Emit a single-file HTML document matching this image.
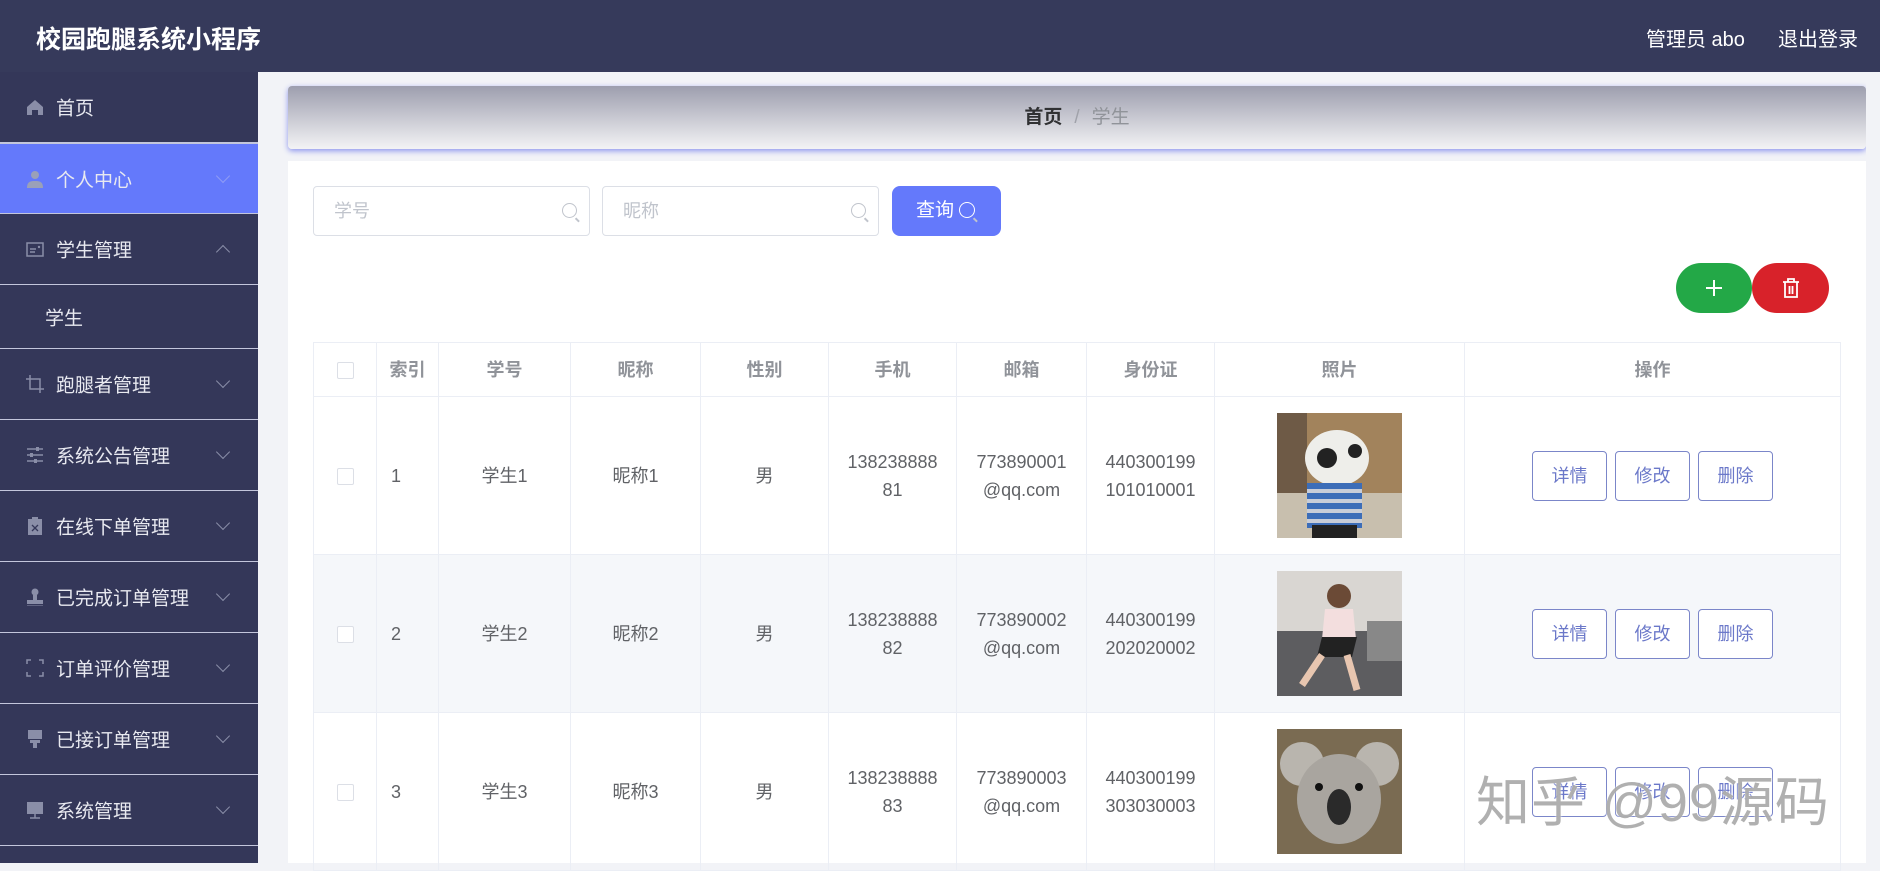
<!DOCTYPE html>
<html><head><meta charset="utf-8">
<style>
*{margin:0;padding:0;box-sizing:border-box}
body{width:1880px;height:863px;overflow:hidden;background:#f2f3f7;font-family:"Liberation Sans","Noto Sans CJK SC",sans-serif;position:relative}
.hdr{position:absolute;left:0;top:0;width:1880px;height:72px;background:#363a5b;color:#fff}
.title{position:absolute;left:36px;top:20px;font-size:25px;font-weight:bold}
.hr{position:absolute;top:23px;font-size:20px}
.side{position:absolute;left:0;top:72px;width:258px;height:791px;background:#343759}
.it{position:absolute;left:0;width:258px;height:71px;color:#e8e9f0;font-size:19px;border-bottom:1.5px solid #c3c6dc}
.it .t{position:absolute;left:56px;top:50%;transform:translateY(-50%)}
.it .ic{position:absolute;left:26px;top:50%;transform:translateY(-50%);width:18px;height:18px}
.it .ar{position:absolute;left:218px;top:50%;margin-top:-8px;width:10px;height:10px;border-right:1.5px solid #8a8ea8;border-bottom:1.5px solid #8a8ea8;transform:rotate(45deg)}
.it .ar.up{transform:rotate(225deg);margin-top:-2px}
.bc{position:absolute;left:288px;top:86px;width:1578px;height:63px;background:linear-gradient(#9d9eae,#f3f3f5);border-radius:4px;box-shadow:0 2px 6px #8c94ee;font-size:19px;text-align:center;line-height:63px}
.card{position:absolute;left:288px;top:161px;width:1578px;height:702px;background:#fff}
.inp{position:absolute;top:186px;width:277px;height:50px;border:1px solid #dcdfe6;border-radius:4px;background:#fff;color:#c0c4cc;font-size:18px;line-height:48px;padding-left:20px}
.mag{position:absolute;right:12px;top:16px;width:15px;height:15px;border:1.5px solid #c0c4cc;border-radius:50%}
.mag:after{content:"";position:absolute;right:-4px;bottom:-3px;width:5px;height:1.5px;background:#c0c4cc;transform:rotate(45deg)}
.qbtn{position:absolute;left:892px;top:186px;width:109px;height:50px;background:#6479fb;border-radius:8px;color:#fff;font-size:19px;line-height:50px;padding-left:24px}
.pill{position:absolute;top:263px;height:50px;border-radius:25px}
table{position:absolute;left:313px;top:342px;border-collapse:collapse;table-layout:fixed;color:#606266;font-size:18px}
td,th{border:1px solid #ebeef5;text-align:center;line-height:28px}
th{height:54px;color:#909399;font-weight:bold}
td{height:158px}
tr.g td{background:#f5f7fa}
.cb{display:inline-block;width:17px;height:17px;border:1px solid #dcdfe6;border-radius:2px;background:#fff;vertical-align:middle}
.ob{display:inline-block;width:75px;height:50px;border:1px solid #7b86c9;border-radius:4px;color:#6b78c9;line-height:48px;margin:0 4px;background:#fff}
.ph{display:block;margin:0 auto;width:125px;height:125px}
.wm{position:absolute;left:1476px;top:758px;font-size:54px;color:rgba(150,150,150,.75);letter-spacing:1px;text-shadow:0 0 2px #fff}
</style></head><body>
<div class="hdr"><div class="title">校园跑腿系统小程序</div>
<div class="hr" style="left:1646px">管理员 abo</div><div class="hr" style="left:1778px">退出登录</div></div>
<div class="side">
<div class="it" style="top:0"><svg class="ic" viewBox="0 0 18 18"><path d="M1 9 9 2l8 7v8h-5v-5H6v5H1z" fill="#8a8ea8"/></svg><span class="t">首页</span></div>
<div class="it" style="top:71px;background:#6479fb;border-top:1.5px solid #c3c6dc"><svg class="ic" viewBox="0 0 18 18"><circle cx="9" cy="5" r="4" fill="#9aa0b8"/><path d="M1 18c0-6 3-7 8-7s8 1 8 7z" fill="#9aa0b8"/></svg><span class="t">个人中心</span><span class="ar" style="border-color:#8f9cf5"></span></div>
<div class="it" style="top:142px"><svg class="ic" viewBox="0 0 18 18"><rect x="1" y="3" width="16" height="13" fill="none" stroke="#8a8ea8" stroke-width="1.5"/><path d="M4 9h6M4 12h5" stroke="#8a8ea8" stroke-width="1.5"/><circle cx="13" cy="7" r="1.2" fill="#8a8ea8"/></svg><span class="t">学生管理</span><span class="ar up"></span></div>
<div class="it" style="top:213px;height:64px;border-bottom:1.5px solid #c3c6dc"><span class="t" style="left:45px">学生</span></div>
<div class="it" style="top:277px"><svg class="ic" viewBox="0 0 18 18"><path d="M4 0v14h14M0 4h14v14" fill="none" stroke="#8a8ea8" stroke-width="1.5"/></svg><span class="t">跑腿者管理</span><span class="ar"></span></div>
<div class="it" style="top:348px"><svg class="ic" viewBox="0 0 18 18"><path d="M1 3h16M1 9h16M1 15h16" stroke="#8a8ea8" stroke-width="1.5"/><rect x="10" y="1" width="3" height="4" fill="#8a8ea8"/><rect x="4" y="7" width="3" height="4" fill="#8a8ea8"/><rect x="8" y="13" width="3" height="4" fill="#8a8ea8"/></svg><span class="t">系统公告管理</span><span class="ar"></span></div>
<div class="it" style="top:419px"><svg class="ic" viewBox="0 0 18 18"><rect x="2" y="2" width="14" height="16" fill="#8a8ea8"/><rect x="6" y="0" width="6" height="3" fill="#8a8ea8"/><path d="M6 8l6 6M12 8l-6 6" stroke="#343759" stroke-width="1.3"/></svg><span class="t">在线下单管理</span><span class="ar"></span></div>
<div class="it" style="top:490px"><svg class="ic" viewBox="0 0 18 18"><circle cx="9" cy="4" r="3.5" fill="#8a8ea8"/><path d="M7 7h4v5h6v4H1v-4h6z" fill="#8a8ea8"/><path d="M1 18h16" stroke="#8a8ea8"/></svg><span class="t">已完成订单管理</span><span class="ar"></span></div>
<div class="it" style="top:561px"><svg class="ic" viewBox="0 0 18 18"><path d="M1 5V1h4M13 1h4v4M17 13v4h-4M5 17H1v-4" fill="none" stroke="#8a8ea8" stroke-width="1.5"/></svg><span class="t">订单评价管理</span><span class="ar"></span></div>
<div class="it" style="top:632px"><svg class="ic" viewBox="0 0 18 18"><rect x="2" y="0" width="14" height="9" fill="#8a8ea8"/><rect x="4" y="10" width="10" height="3" fill="#8a8ea8"/><rect x="7" y="13" width="4" height="5" fill="#8a8ea8"/></svg><span class="t">已接订单管理</span><span class="ar"></span></div>
<div class="it" style="top:703px"><svg class="ic" viewBox="0 0 18 18"><rect x="1" y="1" width="16" height="12" fill="#8a8ea8"/><path d="M4 17h10M9 13v4" stroke="#8a8ea8" stroke-width="1.5"/></svg><span class="t">系统管理</span><span class="ar"></span></div>
</div>
<div class="bc"><b style="color:#303133">首页</b><span style="color:#a0a2aa;margin:0 12px">/</span><span style="color:#909399">学生</span></div>
<div class="card"></div>
<div style="position:absolute;left:1866px;top:72px;width:14px;height:791px;background:#f2f3f7"></div>
<div class="inp" style="left:313px">学号<span class="mag"></span></div>
<div class="inp" style="left:602px">昵称<span class="mag"></span></div>
<div class="qbtn">查询 <span class="mag" style="position:relative;display:inline-block;right:auto;top:2px;border-color:#fff;width:16px;height:16px"></span></div>
<div class="pill" style="left:1676px;width:76px;background:#23a847"><svg style="position:absolute;left:29px;top:16px" width="18" height="18"><path d="M9 1v16M1 9h16" stroke="#fff" stroke-width="2"/></svg></div>
<div class="pill" style="left:1752px;width:77px;background:#d8222a"><svg style="position:absolute;left:30px;top:14px" width="18" height="22" viewBox="0 0 18 22"><path d="M1 5h16M6 5V2h6v3M3 5v15h12V5M7.5 9v8M10.5 9v8" fill="none" stroke="#fff" stroke-width="1.8"/></svg></div>
<table>
<colgroup><col style="width:63px"><col style="width:62px"><col style="width:132px"><col style="width:130px"><col style="width:128px"><col style="width:128px"><col style="width:130px"><col style="width:128px"><col style="width:250px"><col style="width:376px"></colgroup>
<tr><th><span class="cb"></span></th><th>索引</th><th>学号</th><th>昵称</th><th>性别</th><th>手机</th><th>邮箱</th><th>身份证</th><th>照片</th><th>操作</th></tr>
<tr><td><span class="cb"></span></td><td style="text-align:left;padding-left:14px">1</td><td>学生1</td><td>昵称1</td><td>男</td><td>138238888<br>81</td><td>773890001<br>@qq.com</td><td>440300199<br>101010001</td>
<td><svg class="ph" viewBox="0 0 125 125"><rect width="125" height="125" fill="#a2835c"/><rect x="0" y="0" width="30" height="125" fill="#6e5a46"/><rect x="0" y="80" width="125" height="45" fill="#c8bfae"/><ellipse cx="60" cy="45" rx="32" ry="28" fill="#eeeeea"/><circle cx="50" cy="45" r="10" fill="#222"/><circle cx="78" cy="38" r="7" fill="#222"/><path d="M30 70h55v45H30z" fill="#3c6db8"/><path d="M30 78h55M30 88h55M30 98h55M30 108h55" stroke="#c8cdd8" stroke-width="4"/><rect x="35" y="112" width="45" height="13" fill="#222"/></svg></td>
<td><span class="ob">详情</span><span class="ob">修改</span><span class="ob">删除</span></td></tr>
<tr class="g"><td><span class="cb"></span></td><td style="text-align:left;padding-left:14px">2</td><td>学生2</td><td>昵称2</td><td>男</td><td>138238888<br>82</td><td>773890002<br>@qq.com</td><td>440300199<br>202020002</td>
<td><svg class="ph" viewBox="0 0 125 125"><rect width="125" height="125" fill="#d9d6d2"/><rect x="0" y="60" width="125" height="65" fill="#5d5d60"/><rect x="90" y="50" width="35" height="40" fill="#888"/><circle cx="62" cy="25" r="12" fill="#6b4a36"/><path d="M48 38h28l3 30H45z" fill="#f3dede"/><path d="M45 66h35l-5 20H40z" fill="#222"/><path d="M45 84l-20 30M70 84l10 35" stroke="#e8c6b0" stroke-width="7"/></svg></td>
<td><span class="ob">详情</span><span class="ob">修改</span><span class="ob">删除</span></td></tr>
<tr><td><span class="cb"></span></td><td style="text-align:left;padding-left:14px">3</td><td>学生3</td><td>昵称3</td><td>男</td><td>138238888<br>83</td><td>773890003<br>@qq.com</td><td>440300199<br>303030003</td>
<td><svg class="ph" viewBox="0 0 125 125"><rect width="125" height="125" fill="#7a6b52"/><circle cx="25" cy="35" r="22" fill="#b9b5ae"/><circle cx="100" cy="35" r="22" fill="#b9b5ae"/><ellipse cx="62" cy="70" rx="42" ry="45" fill="#a9a59f"/><ellipse cx="62" cy="78" rx="12" ry="18" fill="#2a2a2a"/><circle cx="42" cy="58" r="4" fill="#111"/><circle cx="82" cy="58" r="4" fill="#111"/></svg></td>
<td><span class="ob">详情</span><span class="ob">修改</span><span class="ob">删除</span></td></tr>
</table>
<div class="wm">知乎 @99源码</div>
</body></html>
